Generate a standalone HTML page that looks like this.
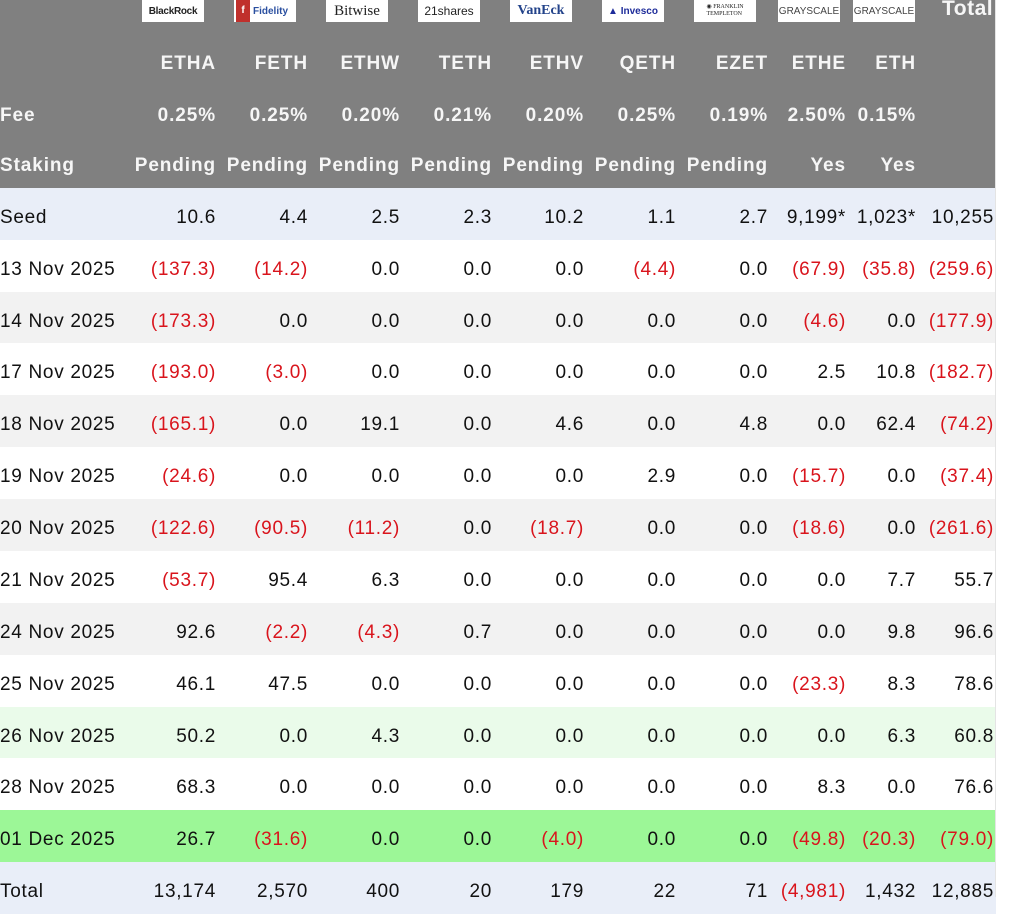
<!DOCTYPE html>
<html><head><meta charset="utf-8"><style>
*{margin:0;padding:0;box-sizing:border-box}
body{width:1035px;height:897px;overflow:hidden;background:#fff;font-family:"Liberation Sans",sans-serif;position:relative}
.hdr{position:absolute;left:0;top:0;width:996px;height:188px;background:#808080}
.row{position:absolute;left:0;width:996px;height:52px;display:flex;align-items:center;padding-top:7px;font-size:19px;color:#111;letter-spacing:0.7px}
.row div{text-align:right;padding-right:2px;white-space:nowrap}
.row div:nth-child(1){width:126px;text-align:left}
.row div:nth-child(n+2){width:92px}
.row div:nth-child(9){width:78px}
.row div:nth-child(10){width:70px}
.row div:nth-child(11){width:78px}
.h{color:#f6f6f6;font-weight:bold;letter-spacing:0.9px}
.r{color:#d9141c}
.logo{position:absolute;top:0;height:22px;width:62px;background:#fff;display:flex;align-items:center;justify-content:center;font-size:10px;color:#222;overflow:hidden;white-space:nowrap}
.vl{position:absolute;left:995px;top:0;width:1px;height:897px;background:#e4e4e4}
</style></head><body>
<div class="hdr"></div>
<div class="logo" style="left:142px;font-weight:bold;letter-spacing:-0.3px">BlackRock</div>
<div class="logo" style="left:234px;justify-content:flex-start"><span style="display:inline-block;width:14px;height:22px;background:#c0302c;color:#fff;font-weight:bold;text-align:center;line-height:22px;margin:0 3px 0 2px">f</span><span style="color:#2a4fa0;font-weight:bold">Fidelity</span></div>
<div class="logo" style="left:326px;font-family:'Liberation Serif',serif;font-size:15px">Bitwise</div>
<div class="logo" style="left:418px;font-size:12px">21shares</div>
<div class="logo" style="left:510px;font-family:'Liberation Serif',serif;font-size:14px;color:#23438a;font-weight:bold">VanEck</div>
<div class="logo" style="left:602px;color:#1e2c9a;font-weight:bold">▲ Invesco</div>
<div class="logo" style="left:694px;font-size:6px;line-height:7px;font-family:'Liberation Serif',serif">◉ FRANKLIN<br>TEMPLETON</div>
<div class="logo" style="left:778px;font-size:10px;color:#444">GRAYSCALE</div>
<div class="logo" style="left:853px;font-size:10px;color:#444">GRAYSCALE</div>
<div style="position:absolute;left:942px;top:-3px;font-size:21px;font-weight:bold;color:#f6f6f6;letter-spacing:0.5px">Total</div>

<div class="row h" style="top:34px"><div></div><div>ETHA</div><div>FETH</div><div>ETHW</div><div>TETH</div><div>ETHV</div><div>QETH</div><div>EZET</div><div>ETHE</div><div>ETH</div><div></div></div>
<div class="row h" style="top:86px"><div>Fee</div><div>0.25%</div><div>0.25%</div><div>0.20%</div><div>0.21%</div><div>0.20%</div><div>0.25%</div><div>0.19%</div><div>2.50%</div><div>0.15%</div><div></div></div>
<div class="row h" style="top:136px;height:52px"><div>Staking</div><div>Pending</div><div>Pending</div><div>Pending</div><div>Pending</div><div>Pending</div><div>Pending</div><div>Pending</div><div>Yes</div><div>Yes</div><div></div></div>

<div class="row" style="top:188px;background:#e9eef8"><div>Seed</div><div>10.6</div><div>4.4</div><div>2.5</div><div>2.3</div><div>10.2</div><div>1.1</div><div>2.7</div><div>9,199*</div><div>1,023*</div><div>10,255</div></div>
<div class="row" style="top:240px;background:#fff"><div>13 Nov 2025</div><div class="r">(137.3)</div><div class="r">(14.2)</div><div>0.0</div><div>0.0</div><div>0.0</div><div class="r">(4.4)</div><div>0.0</div><div class="r">(67.9)</div><div class="r">(35.8)</div><div class="r">(259.6)</div></div>
<div class="row" style="top:292px;background:#f2f2f2"><div>14 Nov 2025</div><div class="r">(173.3)</div><div>0.0</div><div>0.0</div><div>0.0</div><div>0.0</div><div>0.0</div><div>0.0</div><div class="r">(4.6)</div><div>0.0</div><div class="r">(177.9)</div></div>
<div class="row" style="top:343px;background:#fff"><div>17 Nov 2025</div><div class="r">(193.0)</div><div class="r">(3.0)</div><div>0.0</div><div>0.0</div><div>0.0</div><div>0.0</div><div>0.0</div><div>2.5</div><div>10.8</div><div class="r">(182.7)</div></div>
<div class="row" style="top:395px;background:#f2f2f2"><div>18 Nov 2025</div><div class="r">(165.1)</div><div>0.0</div><div>19.1</div><div>0.0</div><div>4.6</div><div>0.0</div><div>4.8</div><div>0.0</div><div>62.4</div><div class="r">(74.2)</div></div>
<div class="row" style="top:447px;background:#fff"><div>19 Nov 2025</div><div class="r">(24.6)</div><div>0.0</div><div>0.0</div><div>0.0</div><div>0.0</div><div>2.9</div><div>0.0</div><div class="r">(15.7)</div><div>0.0</div><div class="r">(37.4)</div></div>
<div class="row" style="top:499px;background:#f2f2f2"><div>20 Nov 2025</div><div class="r">(122.6)</div><div class="r">(90.5)</div><div class="r">(11.2)</div><div>0.0</div><div class="r">(18.7)</div><div>0.0</div><div>0.0</div><div class="r">(18.6)</div><div>0.0</div><div class="r">(261.6)</div></div>
<div class="row" style="top:551px;background:#fff"><div>21 Nov 2025</div><div class="r">(53.7)</div><div>95.4</div><div>6.3</div><div>0.0</div><div>0.0</div><div>0.0</div><div>0.0</div><div>0.0</div><div>7.7</div><div>55.7</div></div>
<div class="row" style="top:603px;background:#f2f2f2"><div>24 Nov 2025</div><div>92.6</div><div class="r">(2.2)</div><div class="r">(4.3)</div><div>0.7</div><div>0.0</div><div>0.0</div><div>0.0</div><div>0.0</div><div>9.8</div><div>96.6</div></div>
<div class="row" style="top:655px;background:#fff"><div>25 Nov 2025</div><div>46.1</div><div>47.5</div><div>0.0</div><div>0.0</div><div>0.0</div><div>0.0</div><div>0.0</div><div class="r">(23.3)</div><div>8.3</div><div>78.6</div></div>
<div class="row" style="top:707px;background:#eafbea"><div>26 Nov 2025</div><div>50.2</div><div>0.0</div><div>4.3</div><div>0.0</div><div>0.0</div><div>0.0</div><div>0.0</div><div>0.0</div><div>6.3</div><div>60.8</div></div>
<div class="row" style="top:758px;background:#fff"><div>28 Nov 2025</div><div>68.3</div><div>0.0</div><div>0.0</div><div>0.0</div><div>0.0</div><div>0.0</div><div>0.0</div><div>8.3</div><div>0.0</div><div>76.6</div></div>
<div class="row" style="top:810px;background:#9cf797"><div>01 Dec 2025</div><div>26.7</div><div class="r">(31.6)</div><div>0.0</div><div>0.0</div><div class="r">(4.0)</div><div>0.0</div><div>0.0</div><div class="r">(49.8)</div><div class="r">(20.3)</div><div class="r">(79.0)</div></div>
<div class="row" style="top:862px;background:#e9eef8"><div>Total</div><div>13,174</div><div>2,570</div><div>400</div><div>20</div><div>179</div><div>22</div><div>71</div><div class="r">(4,981)</div><div>1,432</div><div>12,885</div></div>
<div class="vl"></div>
</body></html>
